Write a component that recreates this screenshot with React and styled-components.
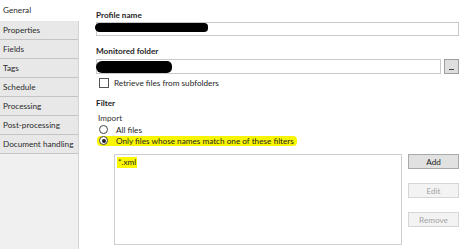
import styled, { createGlobalStyle } from 'styled-components'

const GlobalStyle = createGlobalStyle`
  html, body {
    margin: 0;
    padding: 0;
    background: #fff;
  }
  body {
    font-family: Lato, "Noto Sans", sans-serif;
    font-size: 8.2px;
    color: #1e1e1e;
  }
`

const tabs = ['General', 'Properties', 'Fields', 'Tags', 'Schedule', 'Processing', 'Post-processing', 'Document handling']

const App = () => {
  return (
    <>
      <GlobalStyle />
      <Window>
        <Sidebar>
          {tabs.map((name, i) => (
            <Tab key={name} $active={i === 0}>{name}</Tab>
          ))}
        </Sidebar>

        <Main>
          <Label>Profile name</Label>
          <Field>
            <Input />
            <Redact $w={113} $h={9} $top={1} $left={-1} />
          </Field>

          <Label $gap={9}>Monitored folder</Label>
          <FolderRow>
            <Field $grow>
              <Input $h={15} />
              <Redact $w={76} $h={12} $top={2} $left={0} />
            </Field>
            <Browse>
              <Dots />
            </Browse>
          </FolderRow>

          <CheckRow>
            <Checkbox />
            <span>Retrieve files from subfolders</span>
          </CheckRow>

          <Label $gap={8}>Filter</Label>
          <Sub>Import</Sub>
          <RadioRow>
            <Radio />
            <span>All files</span>
          </RadioRow>
          <RadioRow>
            <Marker>
              <Radio $checked />
              <span>Only files whose names match one of these filters</span>
            </Marker>
          </RadioRow>

          <ListArea>
            <ListBox>
              <Item>*.xml</Item>
            </ListBox>
            <Buttons>
              <Button>Add</Button>
              <Button disabled>Edit</Button>
              <Button disabled>Remove</Button>
            </Buttons>
          </ListArea>
        </Main>
      </Window>
    </>
  )
}

const Window = styled.div`
  display: flex;
  height: 249px;
  overflow: hidden;
`

const Sidebar = styled.div`
  width: 78px;
  flex-shrink: 0;
  background: #f0f0f0;
  border-right: 1px solid #d4d4d4;
  display: flex;
  flex-direction: column;
`

const Tab = styled.div`
  height: ${p => (p.$active ? '20px' : '18px')};
  line-height: ${p => (p.$active ? '20px' : '18px')};
  padding-left: 3px;
  white-space: nowrap;
  color: #2b2b2b;
  background: ${p => (p.$active ? '#fff' : '#e8e8e8')};
  border-bottom: 1px solid ${p => (p.$active ? '#fff' : '#c4c4c4')};
  margin-right: ${p => (p.$active ? '-1px' : '0')};
`

const Main = styled.div`
  flex: 1;
  padding: 9px 15px 0 17px;
  display: flex;
  flex-direction: column;
`

const Label = styled.div`
  font-weight: 700;
  line-height: 12px;
  margin-top: ${p => p.$gap || 0}px;
`

const Field = styled.div`
  position: relative;
  margin-top: 1px;
  flex: ${p => (p.$grow ? 1 : 'none')};
`

const Input = styled.div`
  height: ${p => (p.$h || 14) - 2}px;
  border: 1px solid #c9c9c9;
  background: #fff;
`

const Redact = styled.div`
  position: absolute;
  top: ${p => p.$top}px;
  left: ${p => p.$left}px;
  width: ${p => p.$w}px;
  height: ${p => p.$h}px;
  background: #000;
  border-radius: 6px 5px 5px 6px;
`

const FolderRow = styled.div`
  display: flex;
  gap: 3px;
  margin-top: 1px;
`

const Browse = styled.div`
  box-sizing: border-box;
  width: 15px;
  height: 15px;
  margin-top: 1px;
  border: 1px solid #9e9e9e;
  background: #dedede;
  display: flex;
  align-items: flex-end;
  justify-content: center;
  padding-bottom: 3px;
`

const Dots = styled.div`
  width: 5px;
  height: 1px;
  background: #444;
`

const CheckRow = styled.div`
  display: flex;
  align-items: center;
  gap: 5px;
  height: 12px;
  margin-top: 3px;
  padding-left: 3px;
`

const Checkbox = styled.div`
  width: 8px;
  height: 8px;
  border: 1px solid #555;
  background: #fff;
`

const Sub = styled.div`
  line-height: 12px;
  margin-top: 3px;
  padding-left: 2px;
  color: #333;
`

const RadioRow = styled.div`
  display: flex;
  align-items: center;
  gap: 8px;
  height: 11px;
  padding-left: 3px;
`

const Marker = styled.div`
  display: flex;
  align-items: center;
  gap: 8px;
  height: 10px;
  margin-left: -2px;
  padding: 0 3px 0 2px;
  background: #f8f500;
  border-radius: 4px;
`

const Radio = styled.div`
  width: 7px;
  height: 7px;
  border-radius: 50%;
  border: 1px solid #444;
  background: #fff;
  position: relative;
  &::after {
    content: '';
    display: ${p => (p.$checked ? 'block' : 'none')};
    position: absolute;
    left: 1.5px;
    top: 1.5px;
    width: 4px;
    height: 4px;
    border-radius: 50%;
    background: #1e1e1e;
  }
`

const ListArea = styled.div`
  display: flex;
  gap: 6px;
  margin-top: 8px;
`

const ListBox = styled.div`
  flex: 1;
  margin-left: 18px;
  height: 85px;
  border: 1px solid #cfcfcf;
  background: #fff;
  padding: 2px;
`

const Item = styled.span`
  display: inline-block;
  background: #fbf700;
  line-height: 11px;
  padding: 0 1px;
`

const Buttons = styled.div`
  width: 51px;
  display: flex;
  flex-direction: column;
  gap: 14px;
`

const Button = styled.button`
  height: 15px;
  padding: 0;
  font: inherit;
  color: #1e1e1e;
  background: #e1e1e1;
  border: 1px solid #a9a9a9;
  &:disabled {
    color: #a3a3a3;
    background: #f3f3f3;
    border-color: #d6d6d6;
  }
`

export default App
